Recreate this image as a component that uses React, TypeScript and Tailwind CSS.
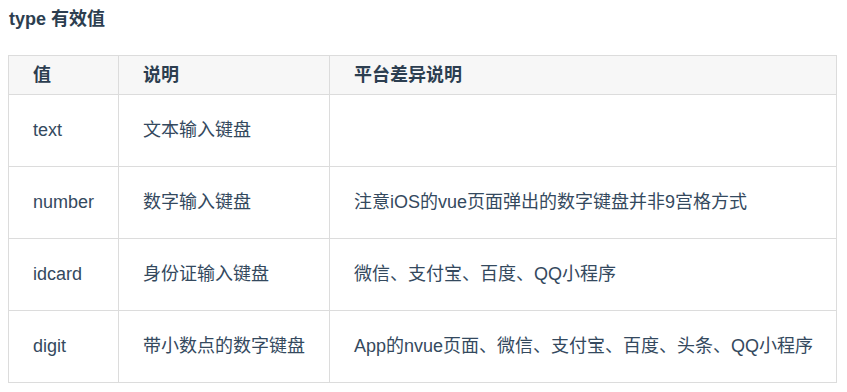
import React from "react";

interface Row {
  value: string;
  desc: string;
  platform: string;
}

const rows: Row[] = [
  { value: "text", desc: "文本输入键盘", platform: "" },
  { value: "number", desc: "数字输入键盘", platform: "注意iOS的vue页面弹出的数字键盘并非9宫格方式" },
  { value: "idcard", desc: "身份证输入键盘", platform: "微信、支付宝、百度、QQ小程序" },
  { value: "digit", desc: "带小数点的数字键盘", platform: "App的nvue页面、微信、支付宝、百度、头条、QQ小程序" },
];

export default function App() {
  return (
    <div
      className="min-h-screen bg-white px-2 text-[#2c3e50]"
      style={{ fontFamily: '"Liberation Sans", "Noto Sans CJK SC", sans-serif' }}
    >
      <h3 className="pt-[6px] pl-px text-[18px] font-bold leading-[27px]">type 有效值</h3>

      {/* Table */}
      <table className="mt-[22px] w-[829px] table-fixed border-collapse text-left text-[18px]">
        <thead>
          <tr className="bg-[#f7f7f7]">
            <th className="w-[110px] border border-[#dcdcdc] px-6 py-0 font-bold leading-[38px]">值</th>
            <th className="w-[211px] border border-[#dcdcdc] px-6 py-0 font-bold leading-[38px]">说明</th>
            <th className="border border-[#dcdcdc] px-6 py-0 font-bold leading-[38px]">平台差异说明</th>
          </tr>
        </thead>
        <tbody>
          {rows.map((row) => (
            <tr key={row.value}>
              <td className="whitespace-nowrap border border-[#dcdcdc] px-6 py-[22px] leading-[27px] text-[#34495e]">
                {row.value}
              </td>
              <td className="whitespace-nowrap border border-[#dcdcdc] px-6 py-[22px] leading-[27px] text-[#34495e]">
                {row.desc}
              </td>
              <td className="whitespace-nowrap border border-[#dcdcdc] pl-6 pr-2 py-[22px] leading-[27px] text-[#34495e]">
                {row.platform}
              </td>
            </tr>
          ))}
        </tbody>
      </table>
    </div>
  );
}
